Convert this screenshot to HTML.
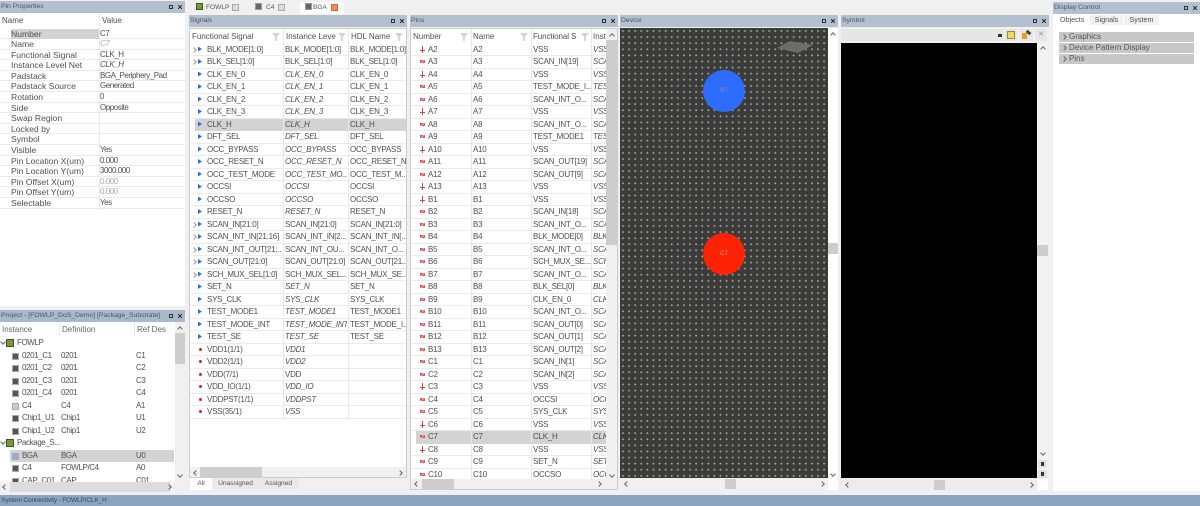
<!DOCTYPE html>
<html><head><meta charset="utf-8"><style>
html,body{margin:0;padding:0;width:1200px;height:506px;overflow:hidden;background:#f0f0f0}
#w{position:relative;width:1200px;height:506px;overflow:hidden;background:#f0f0f0;font:8px/12.5px "Liberation Sans",sans-serif;color:#505050;filter:blur(.35px)}
.a{position:absolute}
.hd{position:absolute;background:#b3c0cf;color:#4a5563;height:12px;line-height:12px;font-size:6.8px;padding-left:1px;box-sizing:border-box}
.hd:after{content:"";position:absolute;right:3px;top:4px;width:4px;height:4px;background:linear-gradient(45deg,transparent 42%,#333 42%,#333 58%,transparent 58%),linear-gradient(-45deg,transparent 42%,#333 42%,#333 58%,transparent 58%)}
.hd:before{content:"";position:absolute;right:12px;top:4px;width:4px;height:4px;border:1px solid #333;box-sizing:border-box}
.pn{position:absolute;background:#fff;overflow:hidden}
.r{position:relative;height:12.5px;box-sizing:border-box;border-bottom:1px solid #ebebeb;white-space:nowrap;letter-spacing:-.25px}
.r span{position:absolute;top:0}
.v{position:absolute;top:0;bottom:0;width:1px;background:#e8e8e8}
.sb{position:absolute;background:#f0f0f0}
.th{position:absolute;background:#cdcdcd}
.c{position:absolute;line-height:12px;white-space:nowrap}
.sel{background:#d3d3d3}
.b,.p,.g,.s{position:absolute;display:block}
.b{left:8px;top:3px;width:4px;height:5px;background:#2a6fe0;clip-path:polygon(0 0,100% 50%,0 100%)}
.p{left:9px;top:4px;width:3px;height:3px;border-radius:50%;background:#d8222a}
.g{left:9px;top:2px;width:5px;height:7px;background:linear-gradient(#d9433f,#d9433f) 2px 0/1px 7px no-repeat,linear-gradient(#d9433f,#d9433f) 0 4px/5px 1px no-repeat}
.s{left:9px;top:4px;width:5px;height:3px;background:linear-gradient(135deg,#e0504a 40%,#f3b0a8 40%,#f3b0a8 60%,#e0504a 60%)}
.x{position:absolute;left:2px;top:4px;width:3px;height:3px;border-top:1px solid #999;border-right:1px solid #999;transform:rotate(45deg)}
.fl{position:absolute;top:33px;width:8px;height:8px;background:#d4d4d4;clip-path:polygon(0 0,100% 0,62% 50%,62% 100%,38% 100%,38% 50%)}
.ic{position:absolute;left:12px;top:3px;width:5px;height:5px;background:#555;border:1px solid #aaa;box-sizing:content-box}
.tg{position:absolute;left:6px;top:2px;width:8px;height:8px;background:#7a9a30;border:1px solid #385a20;box-sizing:border-box}
.ch{position:absolute;left:1px;top:3px;width:3px;height:3px;border-right:1px solid #666;border-bottom:1px solid #666;transform:rotate(45deg)}
.ar{position:absolute;width:3px;height:3px;border-left:1px solid #666;border-top:1px solid #666}
.u{transform:rotate(45deg)}.d{transform:rotate(225deg)}.l{transform:rotate(-45deg)}.rt{transform:rotate(135deg)}
.tab{position:absolute;top:2px;height:11px;line-height:11px;font-size:6.6px;color:#555}
.ti{position:absolute;top:3px;width:7px;height:7px;background:#666;border:1px solid #999;box-sizing:border-box}
.tc{position:absolute;top:4px;width:7px;height:7px;background:#ddd;border:1px solid #aaa;box-sizing:border-box}
.q{height:10.6px;line-height:10.6px;position:relative;border-bottom:1px solid #ebebeb;box-sizing:border-box;white-space:nowrap}
.q span{position:absolute;top:0}
.q span:first-child{left:11px;width:89px;height:10px;font-size:8.6px}
.q span+span{left:100px;letter-spacing:-.45px}
.t{height:12.5px;position:relative;white-space:nowrap;letter-spacing:-.4px}
.t span{position:absolute;top:0}
.t span:nth-of-type(1){left:22px}.t span:nth-of-type(2){left:61px}.t span:nth-of-type(3){left:136px}
.sg span:nth-of-type(1){left:17px;width:75px;overflow:hidden}
.sg span:nth-of-type(2){left:95px;width:62px;overflow:hidden}
.sg span:nth-of-type(3){left:160px;width:57px;overflow:hidden}
.sg em{font-style:italic}
.pi span:nth-of-type(1){left:17px}.pi span:nth-of-type(2){left:62px}.pi span:nth-of-type(3){left:122px}.pi span:nth-of-type(4){left:182px;font-style:italic}
</style></head><body><div id="w">

<!-- Pin Properties -->
<div class="hd" style="left:0;top:1px;width:185px">Pin Properties</div>
<div class="pn" style="left:0;top:13px;width:185px;height:293px">
<div class="c" style="left:2px;top:2px">Name</div><div class="c" style="left:102px;top:2px">Value</div>
<div class="a" style="left:0;top:15.5px;width:185px">
<div class="q"><span class="sel">Number</span><span>C7</span></div>
<div class="q"><span>Name</span><span style="color:#aaa;font-style:italic">C7</span></div>
<div class="q"><span>Functional Signal</span><span>CLK_H</span></div>
<div class="q"><span>Instance Level Net</span><span style="font-style:italic">CLK_H</span></div>
<div class="q"><span>Padstack</span><span>BGA_Periphery_Pad</span></div>
<div class="q"><span>Padstack Source</span><span>Generated</span></div>
<div class="q"><span>Rotation</span><span>0</span></div>
<div class="q"><span>Side</span><span>Opposite</span></div>
<div class="q"><span>Swap Region</span><span></span></div>
<div class="q"><span>Locked by</span><span></span></div>
<div class="q"><span>Symbol</span><span></span></div>
<div class="q"><span>Visible</span><span>Yes</span></div>
<div class="q"><span>Pin Location X(um)</span><span>0.000</span></div>
<div class="q"><span>Pin Location Y(um)</span><span>3000.000</span></div>
<div class="q"><span>Pin Offset X(um)</span><span style="color:#aaa">0.000</span></div>
<div class="q"><span>Pin Offset Y(um)</span><span style="color:#aaa">0.000</span></div>
<div class="q"><span>Selectable</span><span>Yes</span></div>
</div>
<div class="v" style="left:99px;height:197px;bottom:auto"></div>
</div>

<!-- Project -->
<div class="hd" style="left:0;top:310px;width:185px;background:#a9b9cb">Project - [FOWLP_DoS_Demo] [Package_Substrate]</div>
<div class="pn" style="left:0;top:322px;width:185px;height:170px">
<div class="c" style="left:2px;top:2px;color:#666">Instance</div><div class="c" style="left:62px;top:2px;color:#666">Definition</div><div class="c" style="left:137px;top:2px;color:#666">Ref Des</div>
<div class="v" style="left:59px;height:14px;bottom:auto"></div><div class="v" style="left:134px;height:14px;bottom:auto"></div>
<div class="a" style="left:0;top:15px;width:175px;height:145px;overflow:hidden">
<div class="t"><i class="ch"></i><i class="tg"></i><span style="left:17px">FOWLP</span></div>
<div class="t"><i class="ic"></i><span>0201_C1</span><span>0201</span><span>C1</span></div>
<div class="t"><i class="ic"></i><span>0201_C2</span><span>0201</span><span>C2</span></div>
<div class="t"><i class="ic"></i><span>0201_C3</span><span>0201</span><span>C3</span></div>
<div class="t"><i class="ic"></i><span>0201_C4</span><span>0201</span><span>C4</span></div>
<div class="t"><i class="ic" style="background:#ccc"></i><span>C4</span><span>C4</span><span>A1</span></div>
<div class="t"><i class="ic"></i><span>Chip1_U1</span><span>Chip1</span><span>U1</span></div>
<div class="t"><i class="ic"></i><span>Chip1_U2</span><span>Chip1</span><span>U2</span></div>
<div class="t"><i class="ch"></i><i class="tg"></i><span style="left:17px">Package_S...</span></div>
<div class="t sel" style="margin-left:10px;width:164px;left:0"><i class="ic" style="left:2px;background:#8fb0d8"></i><span style="left:12px">BGA</span><span style="left:51px">BGA</span><span style="left:126px">U0</span></div>
<div class="t"><i class="ic"></i><span>C4</span><span>FOWLP/C4</span><span>A0</span></div>
<div class="t"><i class="ic"></i><span>CAP_C01</span><span>CAP</span><span>C01</span></div>
</div>
<div class="sb" style="left:175px;top:0;width:10px;height:170px"></div>
<div class="th" style="left:175px;top:11px;width:10px;height:31px"></div>
<i class="ar u" style="left:178px;top:5px"></i><i class="ar d" style="left:178px;top:151px"></i>
<div class="sb" style="left:0;top:160px;width:175px;height:10px"></div>
<div class="th" style="left:10px;top:160px;width:160px;height:10px;background:#dcdcdc"></div>
<i class="ar l" style="left:3px;top:163px"></i><i class="ar rt" style="left:167px;top:163px"></i>
</div>

<!-- Tabs -->
<div class="a" style="left:300px;top:2px;width:44px;height:12px;background:#fff"></div>
<i class="ti" style="left:196px;background:#7a9a30;border-color:#385a20"></i><div class="tab" style="left:206px">FOWLP</div><i class="tc" style="left:232px"></i>
<i class="ti" style="left:255px"></i><div class="tab" style="left:266px">C4</div><i class="tc" style="left:278px"></i>
<i class="ti" style="left:305px"></i><div class="tab" style="left:313px">BGA</div><i class="tc" style="left:331px;background:#ef8a5a;border-color:#e0662c"></i>

<!-- Signals -->
<div class="hd" style="left:189px;top:15px;width:218px">Signals</div>
<div class="pn" style="left:189px;top:28px;width:218px;height:450px;border:1px solid #ccc;box-sizing:border-box">
<div class="c" style="left:2px;top:2px">Functional Signal</div><div class="c" style="left:96px;top:2px">Instance Leve</div><div class="c" style="left:161px;top:2px">HDL Name</div>
<div class="a" style="left:0;top:14.5px;width:217px">
<div class="r sg"><i class="x"></i><i class="b"></i><span>BLK_MODE[1:0]</span><span>BLK_MODE[1:0]</span><span>BLK_MODE[1:0]</span></div>
<div class="r sg"><i class="x"></i><i class="b"></i><span>BLK_SEL[1:0]</span><span>BLK_SEL[1:0]</span><span>BLK_SEL[1:0]</span></div>
<div class="r sg"><i class="b"></i><span>CLK_EN_0</span><span><em>CLK_EN_0</em></span><span>CLK_EN_0</span></div>
<div class="r sg"><i class="b"></i><span>CLK_EN_1</span><span><em>CLK_EN_1</em></span><span>CLK_EN_1</span></div>
<div class="r sg"><i class="b"></i><span>CLK_EN_2</span><span><em>CLK_EN_2</em></span><span>CLK_EN_2</span></div>
<div class="r sg"><i class="b"></i><span>CLK_EN_3</span><span><em>CLK_EN_3</em></span><span>CLK_EN_3</span></div>
<div class="r sg sel" style="margin-left:5px;width:212px;border:0"><i class="b" style="left:3px"></i><span style="left:12px">CLK_H</span><span style="left:90px"><em>CLK_H</em></span><span style="left:155px">CLK_H</span></div>
<div class="r sg"><i class="b"></i><span>DFT_SEL</span><span><em>DFT_SEL</em></span><span>DFT_SEL</span></div>
<div class="r sg"><i class="b"></i><span>OCC_BYPASS</span><span><em>OCC_BYPASS</em></span><span>OCC_BYPASS</span></div>
<div class="r sg"><i class="b"></i><span>OCC_RESET_N</span><span><em>OCC_RESET_N</em></span><span>OCC_RESET_N</span></div>
<div class="r sg"><i class="b"></i><span>OCC_TEST_MODE</span><span><em>OCC_TEST_MO...</em></span><span>OCC_TEST_M...</span></div>
<div class="r sg"><i class="b"></i><span>OCCSI</span><span><em>OCCSI</em></span><span>OCCSI</span></div>
<div class="r sg"><i class="b"></i><span>OCCSO</span><span><em>OCCSO</em></span><span>OCCSO</span></div>
<div class="r sg"><i class="b"></i><span>RESET_N</span><span><em>RESET_N</em></span><span>RESET_N</span></div>
<div class="r sg"><i class="x"></i><i class="b"></i><span>SCAN_IN[21:0]</span><span>SCAN_IN[21:0]</span><span>SCAN_IN[21:0]</span></div>
<div class="r sg"><i class="x"></i><i class="b"></i><span>SCAN_INT_IN[21:16]</span><span>SCAN_INT_IN[2...</span><span>SCAN_INT_IN[...</span></div>
<div class="r sg"><i class="x"></i><i class="b"></i><span>SCAN_INT_OUT[21:...</span><span>SCAN_INT_OU...</span><span>SCAN_INT_O...</span></div>
<div class="r sg"><i class="x"></i><i class="b"></i><span>SCAN_OUT[21:0]</span><span>SCAN_OUT[21:0]</span><span>SCAN_OUT[21...</span></div>
<div class="r sg"><i class="x"></i><i class="b"></i><span>SCH_MUX_SEL[1:0]</span><span>SCH_MUX_SEL...</span><span>SCH_MUX_SE...</span></div>
<div class="r sg"><i class="b"></i><span>SET_N</span><span><em>SET_N</em></span><span>SET_N</span></div>
<div class="r sg"><i class="b"></i><span>SYS_CLK</span><span><em>SYS_CLK</em></span><span>SYS_CLK</span></div>
<div class="r sg"><i class="b"></i><span>TEST_MODE1</span><span><em>TEST_MODE1</em></span><span>TEST_MODE1</span></div>
<div class="r sg"><i class="b"></i><span>TEST_MODE_INT</span><span><em>TEST_MODE_INT</em></span><span>TEST_MODE_I...</span></div>
<div class="r sg"><i class="b"></i><span>TEST_SE</span><span><em>TEST_SE</em></span><span>TEST_SE</span></div>
<div class="r sg"><i class="p"></i><span>VDD1(1/1)</span><span><em>VDD1</em></span></div>
<div class="r sg"><i class="p"></i><span>VDD2(1/1)</span><span><em>VDD2</em></span></div>
<div class="r sg"><i class="p"></i><span>VDD(7/1)</span><span>VDD</span></div>
<div class="r sg"><i class="p"></i><span>VDD_IO(1/1)</span><span><em>VDD_IO</em></span></div>
<div class="r sg"><i class="p"></i><span>VDDPST(1/1)</span><span><em>VDDPST</em></span></div>
<div class="r sg"><i class="p"></i><span>VSS(35/1)</span><span><em>VSS</em></span></div>
</div>
<div class="v" style="left:93px;top:0;height:391px;bottom:auto"></div><div class="v" style="left:158px;top:0;height:391px;bottom:auto"></div>
<i class="fl" style="left:82px;top:4px"></i><i class="fl" style="left:148px;top:4px"></i><i class="fl" style="left:205px;top:4px"></i>
<div class="sb" style="left:0;top:438px;width:217px;height:11px"></div>
<div class="th" style="left:10px;top:438px;width:62px;height:11px"></div>
<i class="ar l" style="left:4px;top:442px"></i><i class="ar rt" style="left:208px;top:442px"></i>
</div>
<div class="a" style="left:190px;top:478px;width:22px;height:12px;background:#fff;text-align:center;font-size:6.6px;line-height:12px">All</div>
<div class="a" style="left:213px;top:478px;width:45px;height:11px;background:#e9e9e9;text-align:center;font-size:6.6px;line-height:11px">Unassigned</div>
<div class="a" style="left:258px;top:478px;width:41px;height:11px;background:#e9e9e9;text-align:center;font-size:6.6px;line-height:11px">Assigned</div>

<!-- Pins -->
<div class="hd" style="left:410px;top:15px;width:208px">Pins</div>
<div class="pn" style="left:410px;top:28px;width:208px;height:462px;border:1px solid #ccc;box-sizing:border-box">
<div class="c" style="left:2px;top:2px">Number</div><div class="c" style="left:62px;top:2px">Name</div><div class="c" style="left:122px;top:2px;letter-spacing:-.1px">Functional S</div><div class="c" style="left:182px;top:2px">Inst</div>
<div class="a" style="left:0;top:14.5px;width:195px;height:436px;overflow:hidden">
<div class="r pi"><i class="g"></i><span>A2</span><span>A2</span><span>VSS</span><span>VSS</span></div>
<div class="r pi"><i class="s"></i><span>A3</span><span>A3</span><span>SCAN_IN[19]</span><span>SCA</span></div>
<div class="r pi"><i class="g"></i><span>A4</span><span>A4</span><span>VSS</span><span>VSS</span></div>
<div class="r pi"><i class="s"></i><span>A5</span><span>A5</span><span>TEST_MODE_I...</span><span>TES</span></div>
<div class="r pi"><i class="s"></i><span>A6</span><span>A6</span><span>SCAN_INT_O...</span><span>SCA</span></div>
<div class="r pi"><i class="g"></i><span>A7</span><span>A7</span><span>VSS</span><span>VSS</span></div>
<div class="r pi"><i class="s"></i><span>A8</span><span>A8</span><span>SCAN_INT_O...</span><span>SCA</span></div>
<div class="r pi"><i class="s"></i><span>A9</span><span>A9</span><span>TEST_MODE1</span><span>TES</span></div>
<div class="r pi"><i class="g"></i><span>A10</span><span>A10</span><span>VSS</span><span>VSS</span></div>
<div class="r pi"><i class="s"></i><span>A11</span><span>A11</span><span>SCAN_OUT[19]</span><span>SCA</span></div>
<div class="r pi"><i class="s"></i><span>A12</span><span>A12</span><span>SCAN_OUT[9]</span><span>SCA</span></div>
<div class="r pi"><i class="g"></i><span>A13</span><span>A13</span><span>VSS</span><span>VSS</span></div>
<div class="r pi"><i class="g"></i><span>B1</span><span>B1</span><span>VSS</span><span>VSS</span></div>
<div class="r pi"><i class="s"></i><span>B2</span><span>B2</span><span>SCAN_IN[18]</span><span>SCA</span></div>
<div class="r pi"><i class="s"></i><span>B3</span><span>B3</span><span>SCAN_INT_O...</span><span>SCA</span></div>
<div class="r pi"><i class="s"></i><span>B4</span><span>B4</span><span>BLK_MODE[0]</span><span>BLK</span></div>
<div class="r pi"><i class="s"></i><span>B5</span><span>B5</span><span>SCAN_INT_O...</span><span>SCA</span></div>
<div class="r pi"><i class="s"></i><span>B6</span><span>B6</span><span>SCH_MUX_SE...</span><span>SCH</span></div>
<div class="r pi"><i class="s"></i><span>B7</span><span>B7</span><span>SCAN_INT_O...</span><span>SCA</span></div>
<div class="r pi"><i class="s"></i><span>B8</span><span>B8</span><span>BLK_SEL[0]</span><span>BLK</span></div>
<div class="r pi"><i class="s"></i><span>B9</span><span>B9</span><span>CLK_EN_0</span><span>CLK</span></div>
<div class="r pi"><i class="s"></i><span>B10</span><span>B10</span><span>SCAN_INT_O...</span><span>SCA</span></div>
<div class="r pi"><i class="s"></i><span>B11</span><span>B11</span><span>SCAN_OUT[0]</span><span>SCA</span></div>
<div class="r pi"><i class="s"></i><span>B12</span><span>B12</span><span>SCAN_OUT[1]</span><span>SCA</span></div>
<div class="r pi"><i class="s"></i><span>B13</span><span>B13</span><span>SCAN_OUT[2]</span><span>SCA</span></div>
<div class="r pi"><i class="s"></i><span>C1</span><span>C1</span><span>SCAN_IN[1]</span><span>SCA</span></div>
<div class="r pi"><i class="s"></i><span>C2</span><span>C2</span><span>SCAN_IN[2]</span><span>SCA</span></div>
<div class="r pi"><i class="g"></i><span>C3</span><span>C3</span><span>VSS</span><span>VSS</span></div>
<div class="r pi"><i class="s"></i><span>C4</span><span>C4</span><span>OCCSI</span><span>OCC</span></div>
<div class="r pi"><i class="s"></i><span>C5</span><span>C5</span><span>SYS_CLK</span><span>SYS_</span></div>
<div class="r pi"><i class="g"></i><span>C6</span><span>C6</span><span>VSS</span><span>VSS</span></div>
<div class="r pi sel" style="border:0;margin-left:5px"><i class="s" style="left:4px"></i><span style="left:12px">C7</span><span style="left:57px">C7</span><span style="left:117px">CLK_H</span><span style="left:177px">CLK</span></div>
<div class="r pi"><i class="g"></i><span>C8</span><span>C8</span><span>VSS</span><span>VSS</span></div>
<div class="r pi"><i class="s"></i><span>C9</span><span>C9</span><span>SET_N</span><span>SET_</span></div>
<div class="r pi"><i class="s"></i><span>C10</span><span>C10</span><span>OCCSO</span><span>OCC</span></div>
</div>
<div class="v" style="left:60px;top:0;height:450px;bottom:auto"></div><div class="v" style="left:120px;top:0;height:450px;bottom:auto"></div><div class="v" style="left:180px;top:0;height:450px;bottom:auto"></div>
<i class="fl" style="left:49px;top:4px"></i><i class="fl" style="left:109px;top:4px"></i><i class="fl" style="left:170px;top:4px"></i>
<div class="sb" style="left:195px;top:0;width:11px;height:450px"></div>
<div class="th" style="left:195px;top:11px;width:11px;height:205px"></div>
<i class="ar u" style="left:199px;top:5px"></i><i class="ar d" style="left:199px;top:444px"></i>
<div class="sb" style="left:0;top:450px;width:206px;height:10px"></div>
<div class="th" style="left:11px;top:450px;width:32px;height:10px"></div>
<i class="ar l" style="left:4px;top:453px"></i><i class="ar rt" style="left:186px;top:453px"></i>
</div>

<!-- Device -->
<div class="hd" style="left:620px;top:15px;width:218px">Device</div>
<div class="a" style="left:620px;top:28px;width:208px;height:450px;background-color:#3b3b39;background-image:radial-gradient(circle at 3px 3px,#aaaaa6 0,#969692 .8px,transparent 1.2px);background-size:6.1px 6.1px"></div>
<svg class="a" style="left:770px;top:36px" width="50" height="22"><polygon points="7,12 20,5 43,9 28,17" fill="#6d6d6b"/></svg>
<div class="a" style="left:703px;top:70px;width:42px;height:42px;border-radius:50%;background:#2e6bff;text-align:center;line-height:42px;font-size:6px;color:#8f8f9f">B7</div>
<div class="a" style="left:703px;top:233px;width:42px;height:42px;border-radius:50%;background:#ff2306;text-align:center;line-height:42px;font-size:6px;color:#d9a090">C7</div>
<div class="a" style="left:828px;top:28px;width:10px;height:450px;background:#fff"></div>
<div class="th" style="left:828px;top:243px;width:10px;height:11px"></div>
<i class="ar u" style="left:831px;top:33px"></i><i class="ar d" style="left:831px;top:472px"></i>
<div class="sb" style="left:620px;top:478px;width:208px;height:12px"></div>
<div class="th" style="left:725px;top:479px;width:11px;height:10px"></div>
<i class="ar l" style="left:625px;top:482px"></i><i class="ar rt" style="left:820px;top:482px"></i>
<div class="a" style="left:828px;top:478px;width:10px;height:12px;background:#fff"></div>

<!-- Symbol -->
<div class="hd" style="left:841px;top:15px;width:208px">Symbol</div>
<div class="a" style="left:841px;top:29px;width:163px;height:12px;background:#e6e6e6"></div>
<div class="a" style="left:998px;top:34px;width:4px;height:3px;background:#333"></div>
<div class="a" style="left:1005px;top:29px;width:12px;height:12px;background:#e6e6e6"></div>
<div class="a" style="left:1007px;top:31px;width:8px;height:8px;background:#f0d868;border:1px solid #a08a30;box-sizing:border-box"></div>
<div class="a" style="left:1020px;top:29px;width:13px;height:12px;background:#e6e6e6"></div>
<div class="a" style="left:1022px;top:33px;width:5px;height:6px;background:#e8a020"></div>
<div class="a" style="left:1026px;top:31px;width:5px;height:3px;background:#444;transform:rotate(40deg)"></div>
<div class="a" style="left:1035px;top:29px;width:12px;height:12px;background:#e6e6e6;text-align:center;line-height:12px;color:#999;font-size:10px">×</div>
<div class="a" style="left:841px;top:43px;width:196px;height:435px;background:#000"></div>
<div class="a" style="left:1037px;top:43px;width:11px;height:436px;background:#f2f2f2"></div>
<div class="th" style="left:1037px;top:245px;width:11px;height:11px"></div>
<i class="ar u" style="left:1041px;top:47px"></i><i class="ar d" style="left:1041px;top:451px"></i>
<div class="a" style="left:1038px;top:460px;width:9px;height:8px;background:#e0e0e0"></div>
<div class="a" style="left:1041px;top:462px;width:3px;height:4px;background:#333"></div>
<div class="a" style="left:1038px;top:470px;width:9px;height:8px;background:#e0e0e0"></div>
<div class="a" style="left:1041px;top:472px;width:3px;height:4px;background:#333"></div>
<div class="sb" style="left:841px;top:480px;width:196px;height:10px;background:#ececec"></div>
<div class="th" style="left:934px;top:480px;width:11px;height:10px"></div>
<i class="ar l" style="left:846px;top:483px"></i><i class="ar rt" style="left:1029px;top:483px"></i>
<div class="a" style="left:1037px;top:479px;width:11px;height:11px;background:#fff"></div>

<!-- Display Control -->
<div class="hd" style="left:1053px;top:2px;width:147px">Display Control</div>
<div class="a" style="left:1053px;top:14px;width:147px;height:477px;background:#fff"></div>
<div class="a" style="left:1090px;top:15px;width:33px;height:10px;background:#f0f0f0;text-align:center;line-height:10px;font-size:7.2px">Signals</div>
<div class="a" style="left:1124px;top:15px;width:35px;height:10px;background:#f0f0f0;text-align:center;line-height:10px;font-size:7.2px">System</div>
<div class="a" style="left:1060px;top:15px;font-size:7.2px;line-height:10px">Objects</div>
<div class="a" style="left:1059px;top:32px;width:135px;height:10px;background:#c8c8c8;line-height:10px;text-indent:10px;color:#555">Graphics</div>
<div class="a" style="left:1059px;top:43px;width:135px;height:10px;background:#c8c8c8;line-height:10px;text-indent:10px;color:#555">Device Pattern Display</div>
<div class="a" style="left:1059px;top:54px;width:135px;height:10px;background:#c8c8c8;line-height:10px;text-indent:10px;color:#555">Pins</div>
<i class="ar rt" style="left:1062px;top:35px"></i><i class="ar rt" style="left:1062px;top:46px"></i><i class="ar rt" style="left:1062px;top:57px"></i>

<!-- Status -->
<div class="a" style="left:0;top:495px;width:1200px;height:11px;background:#8ba4c2;color:#3c4a5c;font-size:6.6px;letter-spacing:-.2px;line-height:11px;padding-left:1px">System Connectivity - FOWLP/CLK_H</div>
</div></body></html>
